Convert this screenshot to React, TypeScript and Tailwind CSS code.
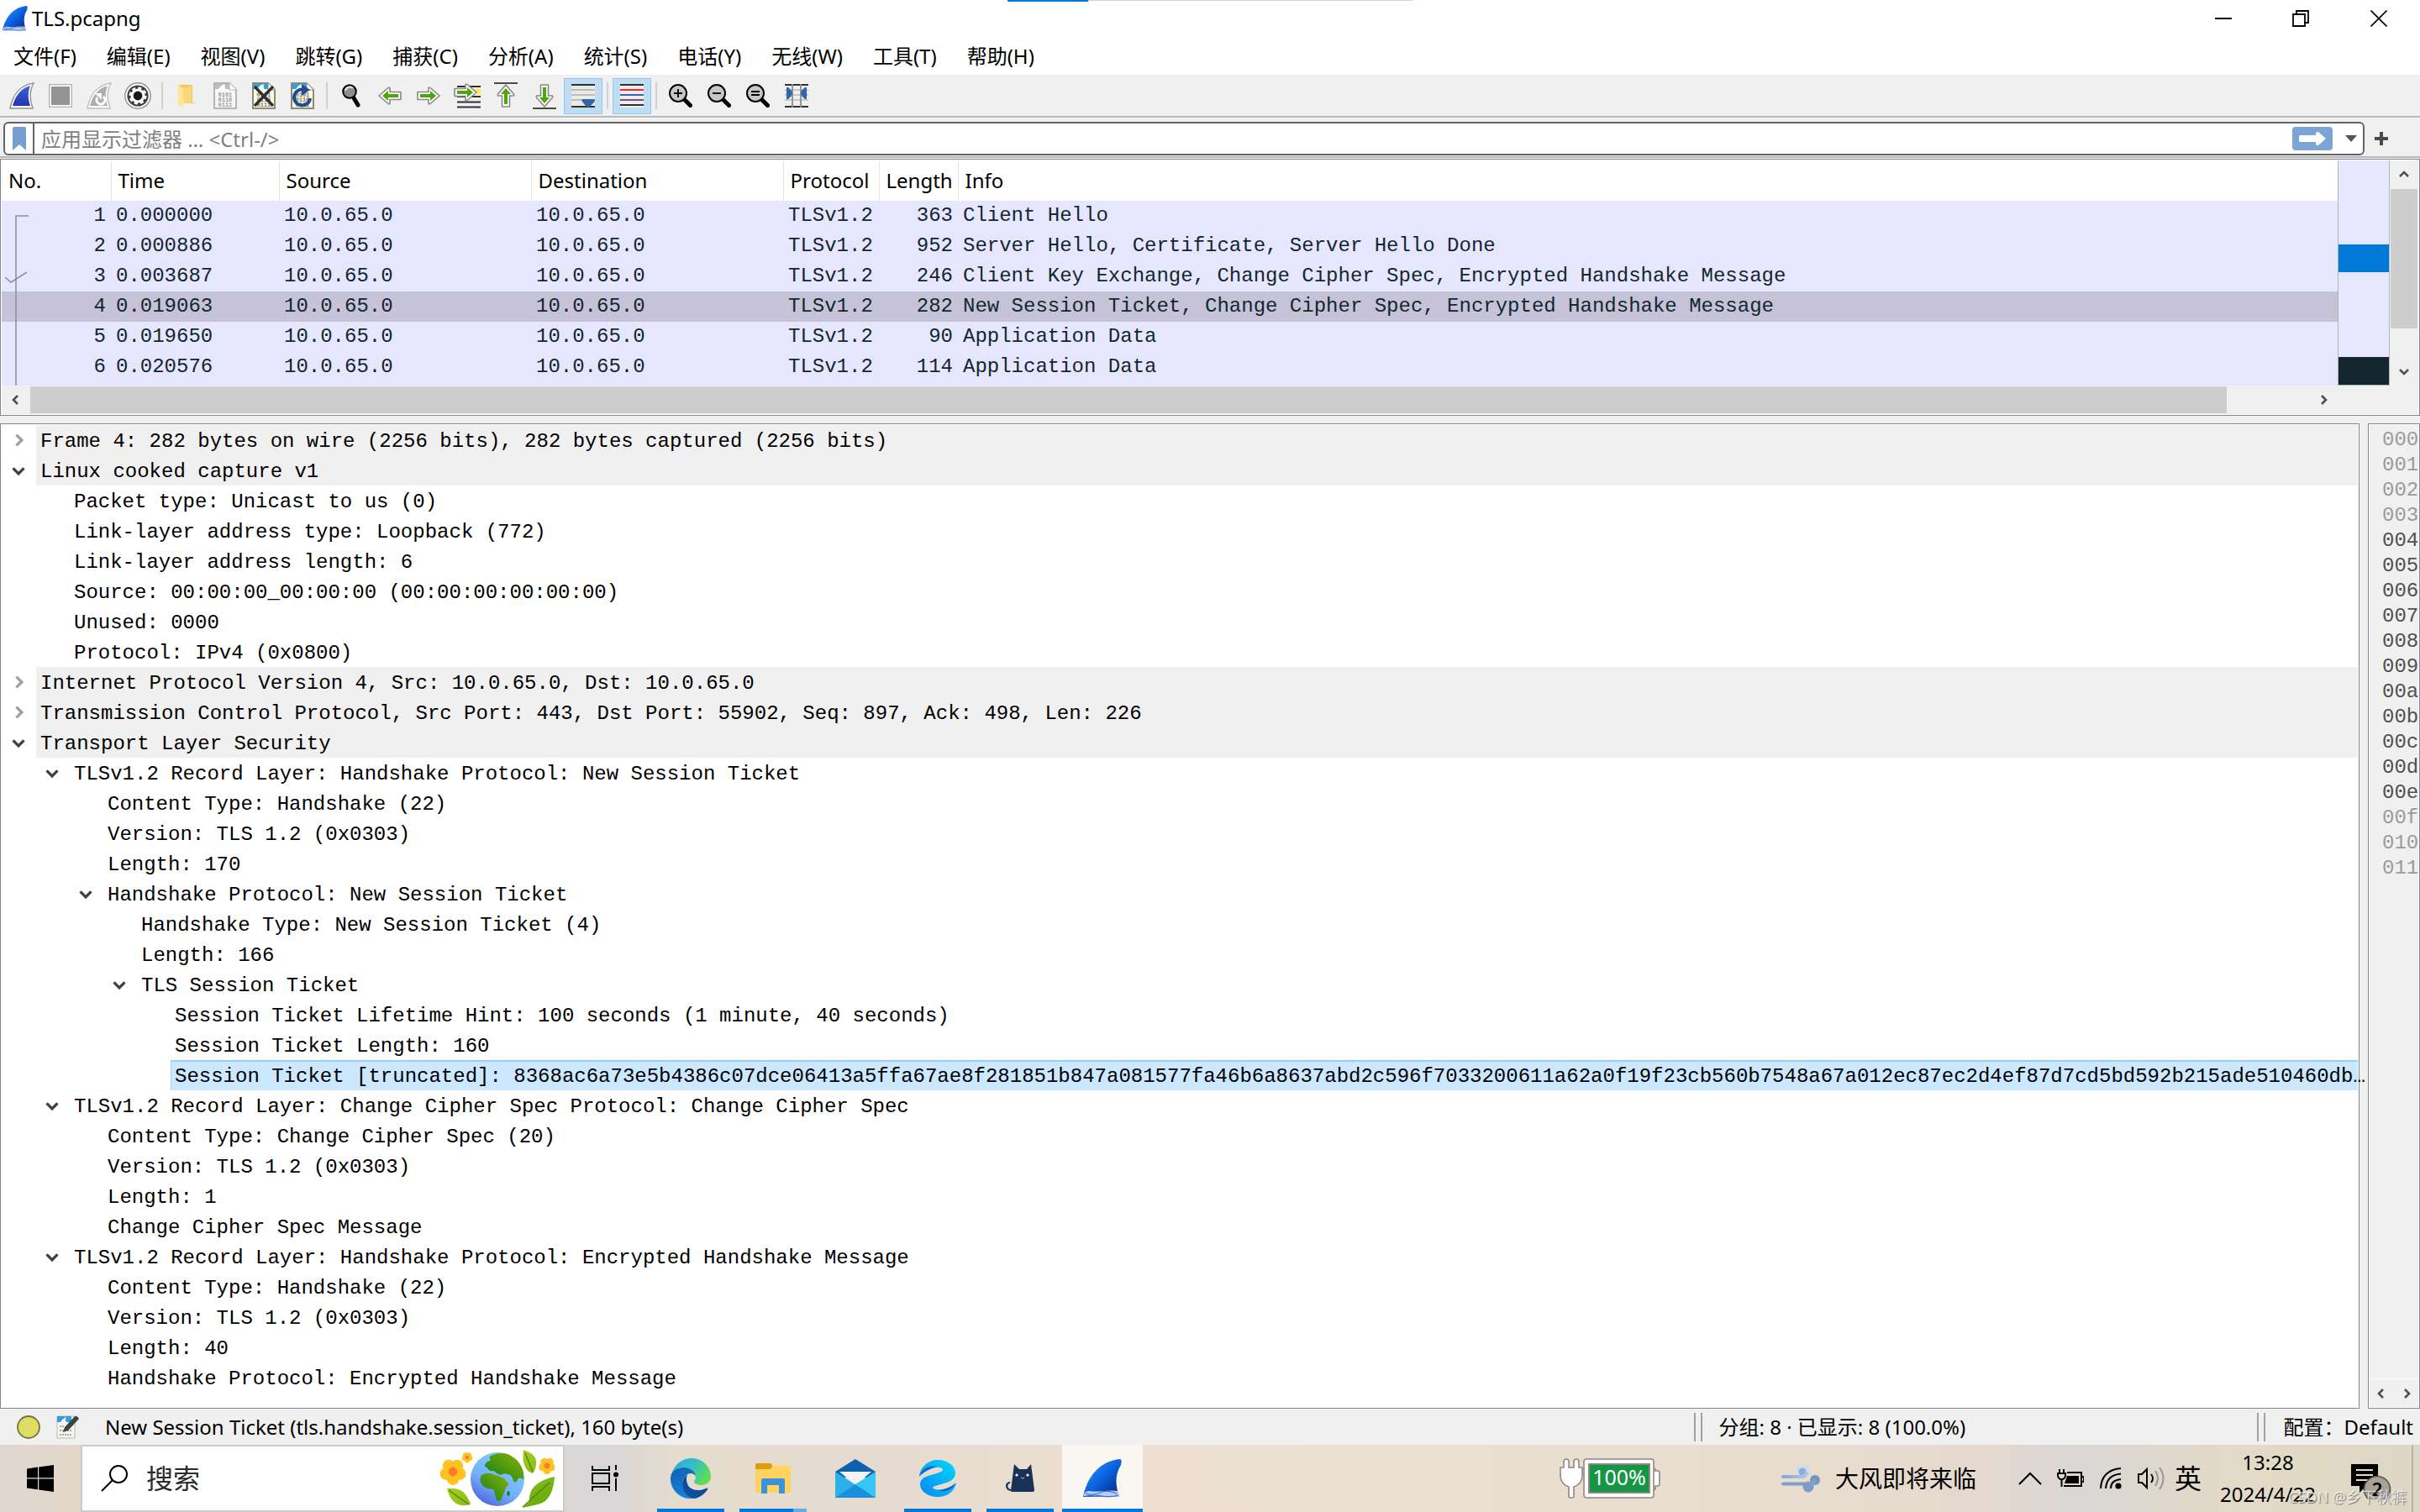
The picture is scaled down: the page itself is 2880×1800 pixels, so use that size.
import React, { useState } from 'react';

const UI_FONT = "font-['Noto_Sans','Noto_Sans_CJK_SC',sans-serif]";
const MONO_FONT = "font-['Liberation_Mono','Noto_Sans_CJK_SC',monospace]";

const menus = [
  '文件(F)', '编辑(E)', '视图(V)', '跳转(G)', '捕获(C)', '分析(A)',
  '统计(S)', '电话(Y)', '无线(W)', '工具(T)', '帮助(H)',
];

interface Packet {
  no: number;
  time: string;
  source: string;
  destination: string;
  protocol: string;
  length: number;
  info: string;
}

const packets: Packet[] = [
  { no: 1, time: '0.000000', source: '10.0.65.0', destination: '10.0.65.0', protocol: 'TLSv1.2', length: 363, info: 'Client Hello' },
  { no: 2, time: '0.000886', source: '10.0.65.0', destination: '10.0.65.0', protocol: 'TLSv1.2', length: 952, info: 'Server Hello, Certificate, Server Hello Done' },
  { no: 3, time: '0.003687', source: '10.0.65.0', destination: '10.0.65.0', protocol: 'TLSv1.2', length: 246, info: 'Client Key Exchange, Change Cipher Spec, Encrypted Handshake Message' },
  { no: 4, time: '0.019063', source: '10.0.65.0', destination: '10.0.65.0', protocol: 'TLSv1.2', length: 282, info: 'New Session Ticket, Change Cipher Spec, Encrypted Handshake Message' },
  { no: 5, time: '0.019650', source: '10.0.65.0', destination: '10.0.65.0', protocol: 'TLSv1.2', length: 90, info: 'Application Data' },
  { no: 6, time: '0.020576', source: '10.0.65.0', destination: '10.0.65.0', protocol: 'TLSv1.2', length: 114, info: 'Application Data' },
];

interface TreeNode {
  text: string;
  level: number;
  state?: 'open' | 'closed';
}

const details: TreeNode[] = [
  { level: 0, state: 'closed', text: 'Frame 4: 282 bytes on wire (2256 bits), 282 bytes captured (2256 bits)' },
  { level: 0, state: 'open', text: 'Linux cooked capture v1' },
  { level: 1, text: 'Packet type: Unicast to us (0)' },
  { level: 1, text: 'Link-layer address type: Loopback (772)' },
  { level: 1, text: 'Link-layer address length: 6' },
  { level: 1, text: 'Source: 00:00:00_00:00:00 (00:00:00:00:00:00)' },
  { level: 1, text: 'Unused: 0000' },
  { level: 1, text: 'Protocol: IPv4 (0x0800)' },
  { level: 0, state: 'closed', text: 'Internet Protocol Version 4, Src: 10.0.65.0, Dst: 10.0.65.0' },
  { level: 0, state: 'closed', text: 'Transmission Control Protocol, Src Port: 443, Dst Port: 55902, Seq: 897, Ack: 498, Len: 226' },
  { level: 0, state: 'open', text: 'Transport Layer Security' },
  { level: 1, state: 'open', text: 'TLSv1.2 Record Layer: Handshake Protocol: New Session Ticket' },
  { level: 2, text: 'Content Type: Handshake (22)' },
  { level: 2, text: 'Version: TLS 1.2 (0x0303)' },
  { level: 2, text: 'Length: 170' },
  { level: 2, state: 'open', text: 'Handshake Protocol: New Session Ticket' },
  { level: 3, text: 'Handshake Type: New Session Ticket (4)' },
  { level: 3, text: 'Length: 166' },
  { level: 3, state: 'open', text: 'TLS Session Ticket' },
  { level: 4, text: 'Session Ticket Lifetime Hint: 100 seconds (1 minute, 40 seconds)' },
  { level: 4, text: 'Session Ticket Length: 160' },
  { level: 4, text: 'Session Ticket [truncated]: 8368ac6a73e5b4386c07dce06413a5ffa67ae8f281851b847a081577fa46b6a8637abd2c596f7033200611a62a0f19f23cb560b7548a67a012ec87ec2d4ef87d7cd5bd592b215ade510460db…' },
  { level: 1, state: 'open', text: 'TLSv1.2 Record Layer: Change Cipher Spec Protocol: Change Cipher Spec' },
  { level: 2, text: 'Content Type: Change Cipher Spec (20)' },
  { level: 2, text: 'Version: TLS 1.2 (0x0303)' },
  { level: 2, text: 'Length: 1' },
  { level: 2, text: 'Change Cipher Spec Message' },
  { level: 1, state: 'open', text: 'TLSv1.2 Record Layer: Handshake Protocol: Encrypted Handshake Message' },
  { level: 2, text: 'Content Type: Handshake (22)' },
  { level: 2, text: 'Version: TLS 1.2 (0x0303)' },
  { level: 2, text: 'Length: 40' },
  { level: 2, text: 'Handshake Protocol: Encrypted Handshake Message' },
];

const indents = ['w-[42px]', 'w-[82px]', 'w-[122px]', 'w-[162px]', 'w-[202px]'];

const offsets = [
  '000', '001', '002', '003', '004', '005', '006', '007', '008',
  '009', '00a', '00b', '00c', '00d', '00e', '00f', '010', '011',
];

/* ---------- small icons ---------- */

const Chevron = ({ dir, className }: { dir: 'up' | 'down' | 'left' | 'right'; className?: string }) => {
  const paths = {
    up: 'M2 9 L7 4 L12 9',
    down: 'M2 5 L7 10 L12 5',
    left: 'M9 2 L4 7 L9 12',
    right: 'M5 2 L10 7 L5 12',
  };
  return (
    <svg viewBox="0 0 14 14" className={className || 'w-3.5 h-3.5 text-[#505050]'} fill="none" stroke="currentColor" strokeWidth="2.6">
      <path d={paths[dir]} />
    </svg>
  );
};

const AppFin = ({ className }: { className: string }) => (
  <svg viewBox="0 0 46 46" className={className}>
    <defs>
      <linearGradient id="appfin" x1="0" y1="0" x2="1" y2="1">
        <stop offset="0" stopColor="#2f9bff" />
        <stop offset="0.5" stopColor="#0c62de" />
        <stop offset="1" stopColor="#03207c" />
      </linearGradient>
    </defs>
    <path d="M0 45 C5 20 20 3 43 0 C46 0 46 3 45 7 C38 18 38 30 43 45 Z" fill="url(#appfin)" />
    <path d="M1 44 C1 40 3 38 8 38 C18 40 30 36 41 38 L44 45 Z" fill="#b9cdf2" />
    <path d="M3 41 Q12 44 20 40 T40 41 M3 44 Q14 42 22 44 T42 43" stroke="#2f62c4" strokeWidth="1" fill="none" />
  </svg>
);

const FinIcon = ({ muted }: { muted?: boolean }) => (
  <svg viewBox="0 0 30 32" className="w-[30px] h-8">
    <defs>
      <linearGradient id="finblue" x1="0" y1="0" x2="0" y2="1">
        <stop offset="0" stopColor="#3c62dc" />
        <stop offset="1" stopColor="#2337a8" />
      </linearGradient>
    </defs>
    <path d="M1 31 C4 15 13 3 29 1 C24 10 24 20 28 31 Z" fill="#fff" stroke={muted ? '#bdbdbd' : '#8e8e8e'} strokeWidth="1.4" />
    <path d="M4 28 C7 16 14 7 25 4 C22 12 22 19 25 28 Z" fill={muted ? '#adadad' : 'url(#finblue)'} />
    {muted && (
      <>
        <path d="M20 17 A5 5 0 1 1 13 18" fill="none" stroke="#fff" strokeWidth="3" />
        <path d="M10 13 H18 V21 Z" fill="#fff" />
      </>
    )}
  </svg>
);

const StopIcon = () => (
  <svg viewBox="0 0 28 28" className="w-7 h-7">
    <rect x="0.7" y="0.7" width="26.6" height="26.6" fill="#fff" stroke="#b5b5b5" strokeWidth="1.4" />
    <rect x="3" y="3" width="22" height="22" fill="#949494" />
  </svg>
);

const OptionsIcon = () => (
  <svg viewBox="0 0 32 32" className="w-8 h-8">
    <circle cx="16" cy="16" r="15.2" fill="#fff" stroke="#909090" strokeWidth="1.4" />
    <circle cx="16" cy="16" r="12.6" fill="#3b3e40" />
    <circle cx="16" cy="16" r="8.6" fill="#fff" />
    <circle cx="16" cy="16" r="9.4" fill="none" stroke="#fff" strokeWidth="2.4" strokeDasharray="4.2 3.18" />
    <circle cx="16" cy="16" r="5.4" fill="#16191b" />
  </svg>
);

const FolderIcon = () => (
  <svg viewBox="0 0 20 28" className="w-5 h-7">
    <path d="M1 1 H17 V22 H20 V23 H6 Z" fill="#f3c95a" />
    <path d="M0 1 L6 5 V28 L0 24 Z" fill="#ffe599" />
    <path d="M6 23 V5 L16 2 V22 Z" fill="#f8d878" />
  </svg>
);

const DocIcon = ({ kind }: { kind: 'save' | 'close' | 'reload' }) => {
  const muted = kind === 'save';
  return (
    <svg viewBox="0 0 28 32" className="w-7 h-8">
      <path d="M1 1 H19 L27 9 V31 H1 Z" fill={muted ? '#f7f7f7' : '#fdfbe6'} stroke={muted ? '#b4b4b4' : '#8b8b7d'} strokeWidth="2" />
      <path d="M2 2 H19 L25 8 H2 Z" fill={muted ? '#bcbcbc' : '#2f9fe0'} />
      <path d="M6 9 C8 4 11 3 14 2 C13 5 14 7 15 9 Z" fill="#fff" />
      <path d="M19 1 V9 H27" fill="#fff" stroke={muted ? '#b4b4b4' : '#8b8b7d'} strokeWidth="1" />
      <g fontFamily="Liberation Mono" fontSize="7" fontWeight="700" fill={muted ? '#9c9c9c' : '#7e7e70'}>
        <text x="5.5" y="16.5">0101</text>
        <text x="5.5" y="22.5">0110</text>
        <text x="5.5" y="28.5">0111</text>
      </g>
      {kind === 'close' && <path d="M3 5 L25 28 M25 5 L3 28" stroke="#2c3234" strokeWidth="3.4" />}
      {kind === 'reload' && (
        <>
          <path d="M15 8.5 A9.5 9.5 0 1 0 23 19" fill="none" stroke="#1f4c8f" strokeWidth="4" />
          <path d="M13 2 L23 9 L13 16 Z" fill="#1f4c8f" />
        </>
      )}
    </svg>
  );
};

const FindIcon = () => (
  <svg viewBox="0 0 22 28" className="w-[22px] h-7">
    <path d="M13 15 L19 25" stroke="#000" strokeWidth="5" strokeLinecap="round" />
    <circle cx="9" cy="9" r="7.8" fill="#8d8d8d" stroke="#000" strokeWidth="2" />
    <path d="M4 8 A5.5 5.5 0 0 1 13 5" fill="none" stroke="#e8e8e8" strokeWidth="2" />
  </svg>
);

const arrowRotation = { right: 0, down: 90, left: 180, up: 270 };

const ArrowShape = ({ dir }: { dir: 'left' | 'right' | 'up' | 'down' }) => (
  <g transform={`rotate(${arrowRotation[dir]} 14 14)`}>
    <path d="M1 9.5 H14 V4.5 Q15 4 16 4.5 L27 14 L16 23.5 Q15 24 14 23.5 V18.5 H1 Z" fill="#fff" stroke="#868a80" strokeWidth="1.6" strokeLinejoin="round" />
    <path d="M4 12 H16 V8 L23 14 L16 20 V16 H4 Z" fill="#4fa50a" />
  </g>
);

const ArrowIcon = ({ dir }: { dir: 'left' | 'right' | 'up' | 'down' }) => (
  <svg viewBox="0 -2 28 32" className="w-7 h-8">
    {dir === 'up' && <path d="M0 -1 H28" stroke="#4a4a4a" strokeWidth="2" />}
    {dir === 'down' && <path d="M0 29 H28" stroke="#4a4a4a" strokeWidth="2" />}
    <ArrowShape dir={dir} />
  </svg>
);

const GotoIcon = () => (
  <svg viewBox="0 0 32 30" className="w-8 h-[30px]">
    <rect x="20" y="7" width="12" height="6" fill="#fce94f" />
    <path d="M4 4 H32 M4 16 H32 M4 22.5 H32 M4 28.5 H32" stroke="#2c3234" strokeWidth="2" />
    <g transform="translate(0 -3)">
      <ArrowShape dir="right" />
    </g>
  </svg>
);

const AutoScrollIcon = () => (
  <svg viewBox="0 0 28 30" className="w-7 h-[30px]">
    <rect y="1" width="28" height="28" fill="#eaeae6" />
    <path d="M0 2 H28 M0 28 H28" stroke="#2c3234" strokeWidth="2" />
    <path d="M0 8 H28 M0 14 H28 M0 20 H28" stroke="#bbbdb6" strokeWidth="2" />
    <path d="M12 20 Q13 19 14 19 H26 Q28 19 28 21 Q26 25 20 29 Q14 25 12 20 Z" fill="#3465a8" />
  </svg>
);

const ColorizeIcon = () => (
  <svg viewBox="0 0 28 30" className="w-7 h-[30px]">
    <rect y="1" width="28" height="28" fill="#eeeeec" />
    <path d="M0 2 H28" stroke="#2c3234" strokeWidth="2" />
    <path d="M0 8 H28" stroke="#ef2929" strokeWidth="2" />
    <path d="M0 14 H28" stroke="#3465a8" strokeWidth="2" />
    <path d="M0 20 H28" stroke="#75507b" strokeWidth="2" />
    <path d="M0 26 H28" stroke="#2c3234" strokeWidth="2" />
  </svg>
);

const ZoomIcon = ({ sign }: { sign: '+' | '-' | '=' }) => (
  <svg viewBox="0 0 28 28" className="w-7 h-7">
    <path d="M19 19 L25.5 25.5" stroke="#000" strokeWidth="5" strokeLinecap="round" />
    <circle cx="11" cy="11" r="10" fill="#c6c6c6" stroke="#000" strokeWidth="2" />
    {sign === '+' && <path d="M6 11 H16 M11 6 V16" stroke="#000" strokeWidth="1.8" />}
    {sign === '-' && <path d="M6 11 H16" stroke="#000" strokeWidth="1.8" />}
    {sign === '=' && <path d="M6 9 H16 M6 13 H16" stroke="#000" strokeWidth="1.8" />}
  </svg>
);

const ResizeColumnsIcon = () => (
  <svg viewBox="0 0 28 30" className="w-7 h-[30px]">
    <path d="M0 8 H28 M0 14 H28 M0 20 H28" stroke="#c9cac5" strokeWidth="2" />
    <path d="M0 2 H28 M0 28 H28" stroke="#2c3234" strokeWidth="2" />
    <path d="M9 1 V29 M19 1 V29" stroke="#8c8e88" strokeWidth="1.8" />
    <path d="M2 6 Q2 4 4 5 Q9 9 9 12 Q9 15 4 19 Q2 20 2 18 Z M26 6 Q26 4 24 5 Q19 9 19 12 Q19 15 24 19 Q26 20 26 18 Z" fill="#3465a8" />
  </svg>
);

/* ---------- building blocks ---------- */

const ToolButton = ({ label, active, children }: { label: string; active?: boolean; children: React.ReactNode }) => (
  <button
    aria-label={label}
    className={`w-[46px] h-[43px] flex items-center justify-center border ${active ? 'bg-[#c0dcf3] border-[#90c8f6]' : 'border-transparent'}`}
  >
    {children}
  </button>
);

const ToolSeparator = () => (
  <div className="w-3 flex justify-center">
    <div className="w-0.5 h-8 bg-[#d0d0d0]" />
  </div>
);

const StatusSeparator = () => <div className="w-2.5 h-[34px] border-x-2 border-[#a0a0a0]" />;

const TaskButton = ({ label, running, active, stacked, children }: {
  label: string;
  running?: boolean;
  active?: boolean;
  stacked?: boolean;
  children: React.ReactNode;
}) => (
  <button aria-label={label} className={`w-24 h-20 flex flex-col items-center ${active ? 'bg-[#faf7f3]' : ''}`}>
    <span className="flex-1 pt-1 flex items-center justify-center">{children}</span>
    <span className={`h-1 flex justify-end ${active ? 'w-24' : 'w-20'} ${running ? 'bg-[#0078d7]' : ''}`}>
      {stacked && <span className="w-4 h-1 bg-[#62abe8]" />}
    </span>
  </button>
);

const Flower = ({ x, y, r }: { x: number; y: number; r: number }) => (
  <g transform={`translate(${x} ${y})`}>
    {[0, 72, 144, 216, 288].map((a) => (
      <ellipse key={a} cx="0" cy={-r * 0.58} rx={r * 0.48} ry={r * 0.48} fill="#ffc21f" transform={`rotate(${a + 36})`} />
    ))}
    <circle r={r * 0.36} fill="#ff7a2e" />
  </g>
);

const EarthArt = () => (
  <svg viewBox="0 0 136 70" className="w-[136px] h-[70px]">
    <defs>
      <linearGradient id="sea" x1="0.8" y1="0" x2="0.2" y2="1">
        <stop offset="0" stopColor="#7fd4ff" />
        <stop offset="0.6" stopColor="#74b0ff" />
        <stop offset="1" stopColor="#4a5fd6" />
      </linearGradient>
      <linearGradient id="land" x1="1" y1="0" x2="0" y2="1">
        <stop offset="0" stopColor="#8cb400" />
        <stop offset="1" stopColor="#0d7c22" />
      </linearGradient>
      <linearGradient id="leaf" x1="0" y1="0" x2="1" y2="1">
        <stop offset="0" stopColor="#c8e02a" />
        <stop offset="1" stopColor="#5fa60c" />
      </linearGradient>
    </defs>
    <circle cx="68" cy="36" r="32" fill="url(#sea)" />
    <path d="M60 8 Q70 3 80 6 Q95 12 99 28 L99 36 Q94 33 92 36 Q90 42 87 38 Q85 30 80 30 Q76 28 72 31 Q66 29 64 26 Q58 27 55 22 Q50 20 56 15 Q62 14 58 10 Z" fill="url(#land)" />
    <path d="M49 31 Q56 27 63 30 Q72 33 76 35 Q80 40 82 42 Q77 45 77 50 Q74 55 73 60 Q68 65 66 58 Q65 52 63 48 Q56 48 51 44 Q45 38 49 31 Z" fill="url(#land)" />
    <ellipse cx="81" cy="53" rx="1.6" ry="3" fill="#0d7c22" />
    <Flower x={15} y={27} r={15} />
    <Flower x={32} y={10} r={6} />
    <Flower x={127} y={20} r={9.5} />
    <path d="M99 1 Q116 7 114 18 Q113 26 110 29 Q96 25 99 1 Z M136 33 Q134 62 116 66 L98 70 L106 63 Q104 40 136 33 Z M8 47 Q20 46 27 51 Q34 58 36 66 Q14 72 8 47 Z" fill="url(#leaf)" />
    <path d="M101 5 L110 27 M130 40 L98 69 M10 49 L34 66" stroke="#56800f" strokeWidth="1.3" fill="none" />
  </svg>
);

const EdgeIcon = () => (
  <svg viewBox="0 0 48 48" className="w-12 h-12">
    <defs>
      <linearGradient id="edgetop" x1="0" y1="0.2" x2="1" y2="0.7">
        <stop offset="0" stopColor="#2aa9e6" />
        <stop offset="0.5" stopColor="#34c3bd" />
        <stop offset="1" stopColor="#66e04a" />
      </linearGradient>
      <linearGradient id="edgeleft" x1="0.3" y1="0" x2="0.6" y2="1">
        <stop offset="0" stopColor="#0f62b5" />
        <stop offset="1" stopColor="#1386e0" />
      </linearGradient>
    </defs>
    <path d="M1 20 C4 7 14 0 25 0 C38 0 48 10 48 22 C48 28 43 32 37 32 C32 32 28 30 28 28 C28 26 30 26 30 22 C30 16 24 11 16 11 C9 11 4 14 1 20 Z" fill="url(#edgetop)" />
    <path d="M0 24 C0 16 7 11 16 11 C24 11 30 16 30 22 C29 19 26 18 24 18 C19 18 14 24 14 31 C14 39 20 47 28 48 C12 50 0 38 0 24 Z" fill="url(#edgeleft)" />
    <path d="M28 48 C20 47 14 40 14 31 C14 26 17 21 20 20 C18 24 19 30 22 34 C27 39 35 39 42 36 C44 35 45 36 43.5 38 C40 43 35 47 28 48 Z" fill="#0d4f9e" />
  </svg>
);

const ExplorerIcon = () => (
  <svg viewBox="0 0 42 36" className="w-[42px] h-9">
    <path d="M0 2 Q0 0 2 0 H17 Q19 0 20 3 H40 Q42 3 42 5 V33 Q42 35 40 35 H2 Q0 35 0 33 Z" fill="#ffd35e" />
    <path d="M0 2 Q0 0 2 0 H17 Q20 0 20 3 Q19 7 16 7 H0 Z" fill="#dd9f08" />
    <path d="M7 36 V20 Q7 18 9 18 H33 Q35 18 35 20 V36 H28 V26 H14 V36 Z" fill="#3b92dc" />
  </svg>
);

const MailIcon = () => (
  <svg viewBox="0 0 48 46" className="w-12 h-[46px]">
    <path d="M0 15 L24 0 L48 15 V22 H0 Z" fill="#0b62ad" />
    <path d="M5 15 H43 L24 31 Z" fill="#f4f4f4" />
    <path d="M0 15 L48 46 H0 Z" fill="#2bb0ea" />
    <path d="M48 15 L24 30 L48 46 Z" fill="#36c5f4" />
    <path d="M0 46 L24 30 L48 46 Z" fill="#1791df" />
  </svg>
);

const IeIcon = () => (
  <svg viewBox="0 0 44 44" className="w-11 h-11">
    <defs>
      <linearGradient id="ie" x1="1" y1="0" x2="0" y2="1">
        <stop offset="0" stopColor="#00d9ff" />
        <stop offset="1" stopColor="#0a86ee" />
      </linearGradient>
    </defs>
    <path d="M0 20 C1 8 11 0 22 0 C34 0 43 7 43 16 C43 23 36 26 29 28 C23 30 17 31 16 33 C18 37 32 37 44 27 C42 38 33 44 22 44 C10 44 1 37 1 29 C1 23 6 20 14 18 C21 16 29 14 28 11 C23 6 10 10 0 20 Z" fill="url(#ie)" />
    <path d="M1 18 C4 9 14 6 21 8 C13 10 6 14 1 18 Z M43 28 C40 36 30 39 22 36 C30 36 38 32 43 28 Z" fill="#0a66c8" />
  </svg>
);

const CatIcon = () => (
  <svg viewBox="0 0 34 34" className="w-[34px] h-[34px]">
    <path d="M7 31 C1 31 -1 24 4 22" fill="none" stroke="#20365c" strokeWidth="2.4" strokeLinecap="round" />
    <path d="M10 0 L16 6 H25 L30 0 L34 31 Q34 33 31 33 H9 Q6 33 6 31 Z" fill="#1b3156" />
    <circle cx="13" cy="13" r="1.6" fill="#fff" />
    <circle cx="26" cy="13" r="1.6" fill="#fff" />
    <path d="M18 16 L20 17 L22 16" stroke="#d7c0b0" strokeWidth="1" fill="none" />
  </svg>
);

const TaskViewIcon = () => (
  <svg viewBox="0 0 32 32" className="w-8 h-8" fill="none" stroke="#000" strokeWidth="2">
    <path d="M1 1 V6 H21 V1 M1 31 V26 H21 V31 M1 10 H21 V22 H1 Z M29 0 V6 M29 16 V31" />
    <circle cx="29" cy="11.5" r="2" fill="#000" />
  </svg>
);

const BatteryWidget = () => (
  <svg viewBox="0 0 120 48" className="w-[120px] h-12">
    <g fill="#fff" stroke="#8f8880" strokeWidth="1.6">
      <path d="M5 11 V4 Q5 1 8 1 Q11 1 11 4 V11 H17 V4 Q17 1 20 1 Q23 1 23 4 V11 H27 V22 Q26 31 17 34 V46 Q17 47 14 47 Q11 47 11 46 V34 Q2 31 1 22 V11 Z" />
      <path d="M110 13 H114 V15 H117 Q119 15 119 18 V30 Q119 33 117 33 H114 V37 H110 Z" />
      <rect x="29" y="1" width="83" height="46" rx="3" />
    </g>
    <rect x="34" y="6" width="74" height="36" fill="#8f8880" />
    <rect x="36" y="8" width="70" height="32" fill="#149645" />
    <text x="71" y="32" textAnchor="middle" fill="#fff" fontFamily="Noto Sans" fontSize="25">100%</text>
  </svg>
);

const WindIcon = () => (
  <svg viewBox="0 0 46 34" className="w-[46px] h-[34px]">
    <defs>
      <linearGradient id="wind" x1="0" y1="0" x2="1" y2="0">
        <stop offset="0" stopColor="#8aa9d6" />
        <stop offset="1" stopColor="#aac4e8" />
      </linearGradient>
    </defs>
    <circle cx="26" cy="8" r="8" fill="#cfdcf0" />
    <circle cx="25" cy="9" r="4.5" fill="#8faedb" />
    <circle cx="32" cy="27" r="6.5" fill="#7d9cc2" />
    <circle cx="40" cy="19" r="6" fill="#7896bd" />
    <path d="M2 15 H24 Q28 15 30 11" stroke="url(#wind)" strokeWidth="4" fill="none" strokeLinecap="round" />
    <path d="M2 23.5 H32 Q38 24 40 20" stroke="#7f9fca" strokeWidth="4" fill="none" strokeLinecap="round" />
  </svg>
);

/* ---------- packet list ---------- */

const PacketList = ({ selected, onSelect }: { selected: number; onSelect: (no: number) => void }) => (
  <section className="border border-[#828790] bg-white p-px flex flex-col">
    <div className="flex h-[268px]">
      <div className="relative flex-1 min-w-0 bg-[#e7e6ff]">
        <table className="w-full table-fixed border-collapse text-2xl">
          <colgroup>
            <col className="w-[130px]" />
            <col className="w-[200px]" />
            <col className="w-[300px]" />
            <col className="w-[300px]" />
            <col className="w-[114px]" />
            <col className="w-[94px]" />
            <col />
          </colgroup>
          <thead>
            <tr className="h-12 bg-white text-left">
              {['No.', 'Time', 'Source', 'Destination', 'Protocol', 'Length', 'Info'].map((name) => (
                <th key={name} className="p-0 pl-2 font-normal border-r border-[#e5e5e5] last:border-r-0 whitespace-nowrap">{name}</th>
              ))}
            </tr>
          </thead>
          <tbody className={`${MONO_FONT} text-[#12272e]`}>
            {packets.map((p) => (
              <tr
                key={p.no}
                onClick={() => onSelect(p.no)}
                className={`h-9 leading-8 ${p.no === selected ? 'bg-[#c6c3d9]' : ''}`}
              >
                <td className="p-0 pr-1.5 text-right">{p.no}</td>
                <td className="p-0 pl-1.5">{p.time}</td>
                <td className="p-0 pl-1.5">{p.source}</td>
                <td className="p-0 pl-1.5">{p.destination}</td>
                <td className="p-0 pl-1.5">{p.protocol}</td>
                <td className="p-0 pr-1.5 text-right">{p.length}</td>
                <td className="p-0 pl-1.5 whitespace-nowrap">{p.info}</td>
              </tr>
            ))}
          </tbody>
        </table>
        {/* conversation bracket over the first column */}
        <svg viewBox="0 0 36 220" className="absolute left-0 top-12 w-9 h-[220px]" fill="none" stroke="#8f8f9c" strokeWidth="1.6">
          <path d="M32 18 H17 V220" />
          <path d="M4 91 L11 97 L30 85" />
        </svg>
      </div>
      <div className="w-[62px] border-x border-b border-[#b4b4b4] bg-[#e7e6ff] flex flex-col">
        <div className="h-[100px]" />
        <div className="h-[33px] bg-[#0078d7]" />
        <div className="flex-1" />
        <div className="h-[33px] bg-[#14272e]" />
      </div>
      <div className="w-[34px] bg-[#f0f0f0] flex flex-col items-center">
        <button aria-label="Scroll up" className="h-[34px] w-full flex items-center justify-center"><Chevron dir="up" /></button>
        <div className="h-[166px] w-8 bg-[#cdcdcd]" />
        <div className="flex-1" />
        <button aria-label="Scroll down" className="h-[34px] w-full flex items-center justify-center"><Chevron dir="down" /></button>
      </div>
    </div>
    <div className="h-[34px] py-px bg-[#f0f0f0] flex pr-24">
      <button aria-label="Scroll left" className="w-[34px] flex items-center justify-center"><Chevron dir="left" /></button>
      <div className="flex-1 flex pr-[98px]">
        <div className="flex-1 bg-[#cdcdcd]" />
      </div>
      <button aria-label="Scroll right" className="w-[34px] flex items-center justify-center"><Chevron dir="right" /></button>
    </div>
  </section>
);

/* ---------- packet details ---------- */

const DetailRow = ({ node }: { node: TreeNode }) => {
  const isSelected = node.text.startsWith('Session Ticket [truncated]');
  const isTop = node.level === 0;

  return (
    <li role="treeitem" aria-selected={isSelected} className="flex h-9">
      <div className={`${indents[node.level]} shrink-0 pr-3 flex items-center justify-end`}>
        {node.state && (
          <button aria-label={node.state === 'open' ? 'Collapse' : 'Expand'}>
            <Chevron
              dir={node.state === 'open' ? 'down' : 'right'}
              className={`w-[18px] h-[18px] ${node.state === 'open' ? 'text-[#404040]' : 'text-[#a0a0a0]'}`}
            />
          </button>
        )}
      </div>
      <div
        className={`flex-1 min-w-0 whitespace-nowrap ${isTop ? 'bg-[#f0f0f0]' : ''} ${
          isSelected ? 'bg-[#cce8ff] border-l border-t-2 border-[#99d1ff] pl-1 leading-9' : 'pl-[5px] leading-10'
        }`}
      >
        {node.text}
      </div>
    </li>
  );
};

const Taskbar = () => (
  <footer className="relative h-20 flex items-stretch bg-[linear-gradient(90deg,#dfd6d0_0%,#e4d8cb_3%,#dcd6d4_20%,#d8d6d7_25%,#e6dccd_28%,#e5dad0_35%,#ecdfd1_45%,#ebdfd0_60%,#e8dccf_76%,#e5d9cf_82%,#d9d6d5_86%,#e2d9c9_91%,#e3dac5_95%,#ddd6c6_100%)]">
    <button aria-label="开始" className="w-24 flex items-center justify-center">
      <svg viewBox="0 0 32 32" className="w-8 h-8">
        <path d="M0 4.5 L13 2.6 V15.3 H0 Z M14.2 2.4 L32 0 V15.3 H14.2 Z M0 16.5 H13 V29.3 L0 27.5 Z M14.2 16.5 H32 V32 L14.2 29.5 Z" fill="#000" />
      </svg>
    </button>
    <label className="w-[576px] border-2 border-[#cccccc] bg-white flex items-center pl-[22px] pr-2.5">
      <svg viewBox="0 0 32 32" className="w-8 h-8 shrink-0" fill="none" stroke="#000" strokeWidth="2">
        <circle cx="21" cy="11" r="10" />
        <path d="M14 18 L1 31" />
      </svg>
      <input
        type="text"
        aria-label="搜索"
        placeholder="搜索"
        className="flex-1 min-w-0 ml-[22px] bg-transparent text-[32px] leading-10 placeholder:text-[#2b2b2b] outline-none"
      />
      <EarthArt />
    </label>
    <TaskButton label="任务视图"><TaskViewIcon /></TaskButton>
    <div className="flex gap-0.5 pl-1.5">
      <TaskButton label="Edge" running><EdgeIcon /></TaskButton>
      <TaskButton label="文件资源管理器" running stacked><ExplorerIcon /></TaskButton>
      <TaskButton label="邮件"><MailIcon /></TaskButton>
      <TaskButton label="浏览器" running><IeIcon /></TaskButton>
      <TaskButton label="Clash" running><CatIcon /></TaskButton>
      <TaskButton label="Wireshark" running active><AppFin className="w-[46px] h-[46px]" /></TaskButton>
    </div>
    <div className="flex-1" />
    <div className="flex items-center pr-36"><BatteryWidget /></div>
    <button className="flex items-center gap-[18px] pr-10 text-[28px] leading-10 whitespace-nowrap">
      <WindIcon />
      大风即将来临
    </button>
    <button aria-label="显示隐藏的图标" className="w-12 flex items-center justify-center">
      <svg viewBox="0 0 28 16" className="w-7 h-4" fill="none" stroke="#000" strokeWidth="2"><path d="M1 15 L14 2 L27 15" /></svg>
    </button>
    <button aria-label="电池" className="w-12 flex items-center justify-center">
      <svg viewBox="0 0 32 24" className="w-8 h-6" fill="none" stroke="#000" strokeWidth="2">
        <path d="M12 5 H29 V21 H8" />
        <path d="M30 10 H32 V16 H30" />
        <path d="M12 9 H26 V18 H9 Z" fill="#000" stroke="none" />
        <path d="M3 1 V6 M8 1 V6 M1 6 H10 V9 Q9 13 6 13 H5 Q2 13 1 9 Z M5.5 13 V22" />
      </svg>
    </button>
    <button aria-label="网络" className="w-12 flex items-center justify-center">
      <svg viewBox="0 0 26 26" className="w-[26px] h-[26px]" fill="none" stroke="#000" strokeWidth="2">
        <path d="M1 25 Q2 3 25 1 M7 25 Q8 9 25 7.5 M13 25 Q13 15 25 14" />
        <circle cx="22" cy="22" r="2.6" fill="#000" />
      </svg>
    </button>
    <button aria-label="音量" className="w-12 flex items-center justify-center">
      <svg viewBox="0 0 32 28" className="w-8 h-7" fill="none" stroke="#000" strokeWidth="2">
        <path d="M1 9 H5 L11 3 V25 L5 19 H1 Z" />
        <path d="M16 9 Q20 14 16 19" />
        <path d="M21 5 Q27 14 21 23 M26 1 Q35 14 26 27" stroke="#9a958f" />
      </svg>
    </button>
    <button className="w-12 pr-2 text-[32px]">英</button>
    <button className="w-[138px] pr-1 flex flex-col items-center justify-center text-2xl leading-[38px]">
      <span>13:28</span>
      <span>2024/4/22</span>
    </button>
    <button aria-label="通知" className="w-[100px] pl-7 flex items-center">
      <svg viewBox="0 0 50 50" className="w-[50px] h-[50px]">
        <path d="M0 8 H32 V34 H18 L10 42 V34 H0 Z" fill="#000" />
        <path d="M6 15 H26 M6 21 H26 M6 27 H20" stroke="#e2d9c9" strokeWidth="2" />
        <circle cx="31" cy="38" r="15.5" fill="#a6a29a" stroke="#55524d" strokeWidth="1.6" />
        <text x="31" y="46" textAnchor="middle" fontFamily="Noto Sans" fontSize="22" fontWeight="600">2</text>
      </svg>
    </button>
    <div className="w-2.5 border-l-2 border-[#b9b3a6]" />
    <span className="absolute right-4 bottom-1 text-[18px] leading-7 text-white/70 [text-shadow:1px_1px_1px_#777]">CSDN @乡下秋裤</span>
  </footer>
);

function App() {
  const [filter, setFilter] = useState('');
  const [selected, setSelected] = useState(4);

  return (
    <div className={`min-h-screen flex flex-col bg-[#f0f0f0] text-black text-2xl ${UI_FONT}`}>
      {/* Title bar */}
      <header className="relative h-11 bg-white flex items-center pl-0.5 pr-0.5">
        <AppFin className="w-8 h-[30px]" />
        <h1 className="ml-1">TLS.pcapng</h1>
        <div className="flex-1" />
        <button aria-label="最小化" className="w-[92px] flex justify-center">
          <svg viewBox="0 0 20 20" className="w-5 h-5"><path d="M0 10 H20" stroke="#000" strokeWidth="2" /></svg>
        </button>
        <button aria-label="还原" className="w-[92px] flex justify-center">
          <svg viewBox="0 0 20 20" className="w-5 h-5" fill="none" stroke="#000" strokeWidth="1.8">
            <path d="M1 5 H15 V19 H1 Z M5 5 V1 H19 V15 H15" />
          </svg>
        </button>
        <button aria-label="关闭" className="w-[94px] flex justify-center">
          <svg viewBox="0 0 20 20" className="w-5 h-5"><path d="M0.5 0.5 L19.5 19.5 M19.5 0.5 L0.5 19.5" stroke="#000" strokeWidth="1.6" /></svg>
        </button>
        <div className="absolute top-0 left-[1199px] w-[482px] h-px bg-[#d4d4d4] flex">
          <div className="w-24 h-0.5 bg-[#0078d7]" />
        </div>
      </header>

      <nav className="h-[46px] bg-white border-b border-[#f0f0f0] flex items-center gap-9 pl-4">
        {menus.map((m) => (
          <button key={m} className="whitespace-nowrap">{m}</button>
        ))}
      </nav>

      {/* Toolbar */}
      <div className="h-[50px] border-b-2 border-[#b8b8b8] flex items-center pl-[3px]">
        <ToolButton label="开始捕获"><FinIcon /></ToolButton>
        <ToolButton label="停止捕获"><StopIcon /></ToolButton>
        <ToolButton label="重新捕获"><FinIcon muted /></ToolButton>
        <ToolButton label="捕获选项"><OptionsIcon /></ToolButton>
        <ToolSeparator />
        <ToolButton label="打开"><FolderIcon /></ToolButton>
        <ToolButton label="保存"><DocIcon kind="save" /></ToolButton>
        <ToolButton label="关闭文件"><DocIcon kind="close" /></ToolButton>
        <ToolButton label="重新加载"><DocIcon kind="reload" /></ToolButton>
        <ToolSeparator />
        <ToolButton label="查找"><FindIcon /></ToolButton>
        <ToolButton label="后退"><ArrowIcon dir="left" /></ToolButton>
        <ToolButton label="前进"><ArrowIcon dir="right" /></ToolButton>
        <ToolButton label="转到分组"><GotoIcon /></ToolButton>
        <ToolButton label="首个分组"><ArrowIcon dir="up" /></ToolButton>
        <ToolButton label="末个分组"><ArrowIcon dir="down" /></ToolButton>
        <ToolButton label="自动滚动" active><AutoScrollIcon /></ToolButton>
        <ToolSeparator />
        <ToolButton label="着色" active><ColorizeIcon /></ToolButton>
        <ToolSeparator />
        <ToolButton label="放大"><ZoomIcon sign="+" /></ToolButton>
        <ToolButton label="缩小"><ZoomIcon sign="-" /></ToolButton>
        <ToolButton label="正常大小"><ZoomIcon sign="=" /></ToolButton>
        <ToolButton label="调整列宽"><ResizeColumnsIcon /></ToolButton>
      </div>

      {/* Display filter */}
      <div className="h-12 border-t border-b-2 border-t-white border-b-[#b8b8b8] flex items-center pt-[3px] pl-1 pr-[38px] gap-3">
        <div className="flex-1 h-10 border-2 border-[#646464] rounded-md bg-white flex items-center">
          <button aria-label="书签" className="w-[35px] h-full border-r-2 border-[#646464] flex items-center justify-center">
            <svg viewBox="0 0 16 28" className="w-4 h-7"><path d="M0 2 Q0 0 2 0 H14 Q16 0 16 2 V28 L8 21 L0 28 Z" fill="#749fd0" /></svg>
          </button>
          <input
            type="text"
            aria-label="显示过滤器"
            value={filter}
            onChange={(e) => setFilter(e.target.value)}
            placeholder="应用显示过滤器 … <Ctrl-/>"
            className="flex-1 h-full pl-2 outline-none placeholder:text-[#808080]"
          />
          <button aria-label="应用" className="w-12 h-7 mr-2 rounded bg-[#7aa5d6] flex items-center justify-center">
            <svg viewBox="0 0 32 16" className="w-8 h-4"><path d="M1 4 H20 V1 Q21 0 23 0 L32 8 L23 16 Q21 16 20 15 V12 H1 Q0 12 0 8 Q0 4 1 4 Z" fill="#fff" /></svg>
          </button>
          <button aria-label="最近的过滤器" className="w-7 h-full flex items-center justify-center">
            <svg viewBox="0 0 14 8" className="w-3.5 h-2"><path d="M0 0 H14 L7 8 Z" fill="#555" /></svg>
          </button>
        </div>
        <button aria-label="添加过滤按钮">
          <svg viewBox="0 0 16 16" className="w-4 h-4"><path d="M0 8 H16 M8 0 V16" stroke="#4a4a4a" strokeWidth="4" /></svg>
        </button>
      </div>

      <div className="pt-px">
        <PacketList selected={selected} onSelect={setSelected} />
      </div>

      {/* Details and bytes */}
      <main className={`flex-1 flex gap-2.5 pt-[9px] ${MONO_FONT}`}>
        <ul role="tree" aria-label="分组详情" className="flex-1 min-w-0 border border-[#828790] bg-white py-px pr-px">
          {details.map((node, i) => (
            <DetailRow key={i} node={node} />
          ))}
        </ul>
        <section aria-label="分组字节" className="w-[62px] border border-[#828790] flex flex-col overflow-hidden outline-1 -outline-offset-2 outline-white">
          <div className="flex-1 pl-4 pt-1">
            {offsets.map((o, i) => (
              <div key={o} className={`leading-[30px] ${i > 3 && i < 15 ? 'text-[#505050]' : 'text-[#9b9b9b]'}`}>{o}</div>
            ))}
          </div>
          <div className="h-[35px] flex border-t border-white">
            <button aria-label="Scroll left" className="flex-1 flex items-center justify-center"><Chevron dir="left" /></button>
            <button aria-label="Scroll right" className="flex-1 flex items-center justify-center"><Chevron dir="right" /></button>
          </div>
        </section>
      </main>

      {/* Status bar */}
      <div className="h-[43px] flex items-center pl-5 pr-2 whitespace-nowrap">
        <button aria-label="专家信息">
          <svg viewBox="0 0 28 28" className="w-7 h-7"><circle cx="14" cy="14" r="13" fill="#dfdc62" stroke="#76753f" strokeWidth="1.8" /></svg>
        </button>
        <button aria-label="文件注释" className="ml-[19px]">
          <svg viewBox="0 0 28 28" className="w-7 h-7">
            <path d="M1 1 H22 V27 H1 Z" fill="#f6f6f0" stroke="#b9b9b0" strokeWidth="1" />
            <path d="M1 1 H18 V8 H1 Z" fill="#2f9fe0" />
            <path d="M5 8 Q8 3 12 2 Q10 5 12 8 Z" fill="#fff" />
            <path d="M4 13 H10 M4 18 H18 M4 23 H18" stroke="#a9a9a0" strokeWidth="2" strokeDasharray="2 1" />
            <path d="M8 20 L10 14 L22 1 Q25 0 27 4 L14 18 Z" fill="#3e4244" />
          </svg>
        </button>
        <span className="ml-[30px] flex-1">New Session Ticket (tls.handshake.session_ticket), 160 byte(s)</span>
        <StatusSeparator />
        <span className="ml-5 w-[640px]">分组: 8 · 已显示: 8 (100.0%)</span>
        <StatusSeparator />
        <button className="ml-[22px]">配置：Default</button>
      </div>

      <Taskbar />
    </div>
  );
}

export default App;
